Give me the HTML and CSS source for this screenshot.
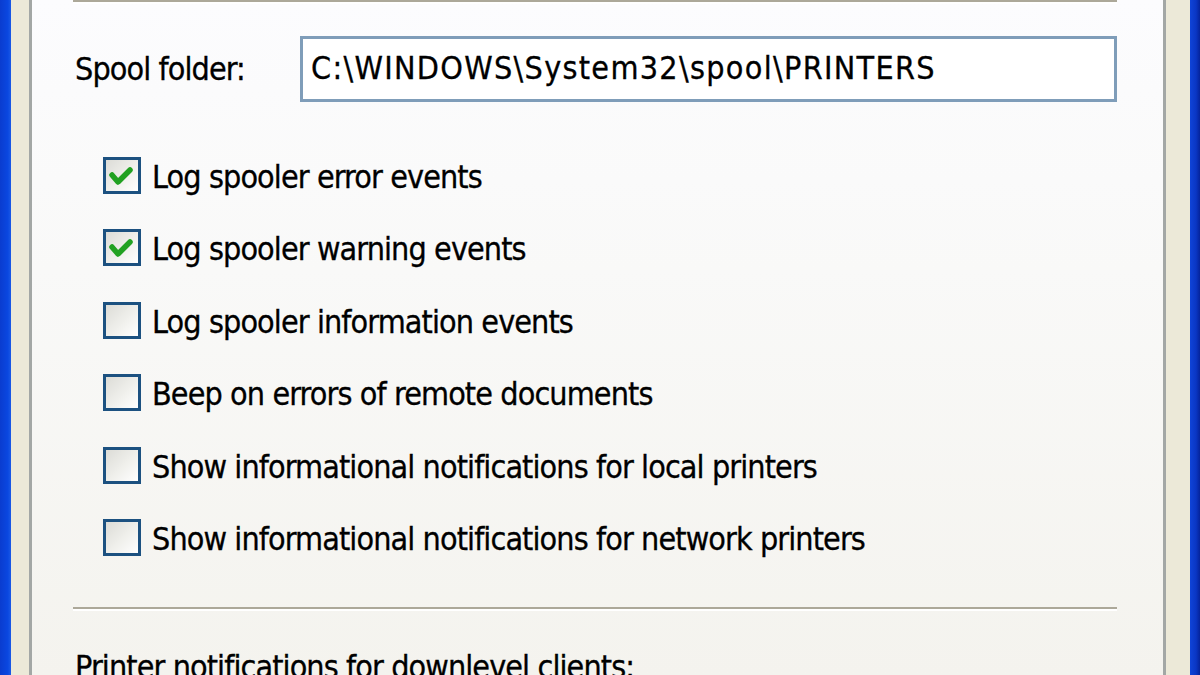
FILE: index.html
```html
<!DOCTYPE html>
<html>
    <head>
        <meta charset="UTF-8">
        <title>Print Server Properties - Advanced</title>
        <link rel="stylesheet" href="styles.css">
    </head>

    <body>
        <div class="frame-blue left"></div>
        <div class="frame-beige left"></div>

        <div id="panel">
            <div class="separator top"></div>

            <div class="folder-row">
                <label for="spool">Spool folder:</label>
                <div class="textbox" id="spool">C:\WINDOWS\System32\spool\PRINTERS</div>
            </div>

            <div class="checks">
                <div class="check-row">
                    <span class="box checked"><svg viewBox="0 0 38 37" width="38" height="37"><path d="M9 18 L15 25 L27 13" fill="none" stroke="#21a121" stroke-width="5.5" stroke-linecap="round" stroke-linejoin="round"/></svg></span>
                    <span class="text">Log spooler error events</span>
                </div>
                <div class="check-row">
                    <span class="box checked"><svg viewBox="0 0 38 37" width="38" height="37"><path d="M9 18 L15 25 L27 13" fill="none" stroke="#21a121" stroke-width="5.5" stroke-linecap="round" stroke-linejoin="round"/></svg></span>
                    <span class="text">Log spooler warning events</span>
                </div>
                <div class="check-row">
                    <span class="box"></span>
                    <span class="text">Log spooler information events</span>
                </div>
                <div class="check-row">
                    <span class="box"></span>
                    <span class="text">Beep on errors of remote documents</span>
                </div>
                <div class="check-row">
                    <span class="box"></span>
                    <span class="text">Show informational notifications for local printers</span>
                </div>
                <div class="check-row">
                    <span class="box"></span>
                    <span class="text">Show informational notifications for network printers</span>
                </div>
            </div>

            <div class="separator bottom"></div>

            <div class="downlevel">Printer notifications for downlevel clients:</div>
        </div>

        <div class="frame-beige right"></div>
        <div class="frame-blue right"></div>
    </body>
</html>
```

FILE: styles.css
```css
* {
    box-sizing: border-box;
}
body {
    margin: 0;
    padding: 0;
    width: 1200px;
    height: 675px;
    overflow: hidden;
    display: flex;
    font-family: 'DejaVu Sans', 'Liberation Sans', sans-serif;
    font-stretch: semi-condensed;
    font-size: 32px;
    letter-spacing: -0.9px;
    -webkit-text-stroke: 0.3px #000;
    color: #000;
}
.frame-blue {
    width: 10px;
    flex-shrink: 0;
}
.frame-blue.left {
    width: 11px;
    background: linear-gradient(90deg, #0a3ccf 0%, #0a47e0 70%, #1b5ae6 100%);
}
.frame-blue.right {
    background: linear-gradient(90deg, #0f44d8 0%, #0a36c4 60%, #05239a 100%);
}
.frame-beige {
    flex-shrink: 0;
    background: #ece9d8;
}
.frame-beige.left {
    width: 18px;
}
.frame-beige.right {
    width: 24px;
}
#panel {
    flex: 1;
    display: flex;
    flex-direction: column;
    padding: 0 46px 0 41px;
    border-left: 3px solid #a3a7a5;
    border-right: 3px solid #a3a7a5;
    background: linear-gradient(180deg, #fcfcfe 0%, #f9f9f8 40%, #f4f3ee 100%);
    overflow: hidden;
}
.separator {
    height: 4px;
    border-top: 2px solid #aca899;
    border-bottom: 2px solid #ffffff;
    flex-shrink: 0;
}
.folder-row {
    display: flex;
    align-items: center;
    margin-top: 32px;
    height: 66px;
}
.folder-row label {
    width: 227px;
    flex-shrink: 0;
    padding-left: 2px;
}
.textbox {
    flex: 1;
    height: 66px;
    line-height: 58px;
    border: 3px solid #7f9db9;
    background: #fff;
    padding-left: 8px;
    letter-spacing: 1.3px;
    white-space: nowrap;
}
.checks {
    margin-top: 55px;
    padding-left: 30px;
    display: flex;
    flex-direction: column;
}
.check-row {
    display: flex;
    align-items: flex-start;
    height: 72.4px;
}
.box {
    width: 38px;
    height: 37px;
    border: 3px solid #1c5180;
    background: linear-gradient(135deg, #dcdcd7 0%, #f0f0ec 55%, #ffffff 100%);
    flex-shrink: 0;
    position: relative;
}
.box svg {
    position: absolute;
    left: -3px;
    top: -3px;
}
.text {
    margin-left: 11px;
    line-height: 40px;
    white-space: nowrap;
}
.separator.bottom {
    margin-top: 16px;
}
.downlevel {
    margin-top: 36px;
    padding-left: 2px;
    line-height: 40px;
    white-space: nowrap;
}
```
